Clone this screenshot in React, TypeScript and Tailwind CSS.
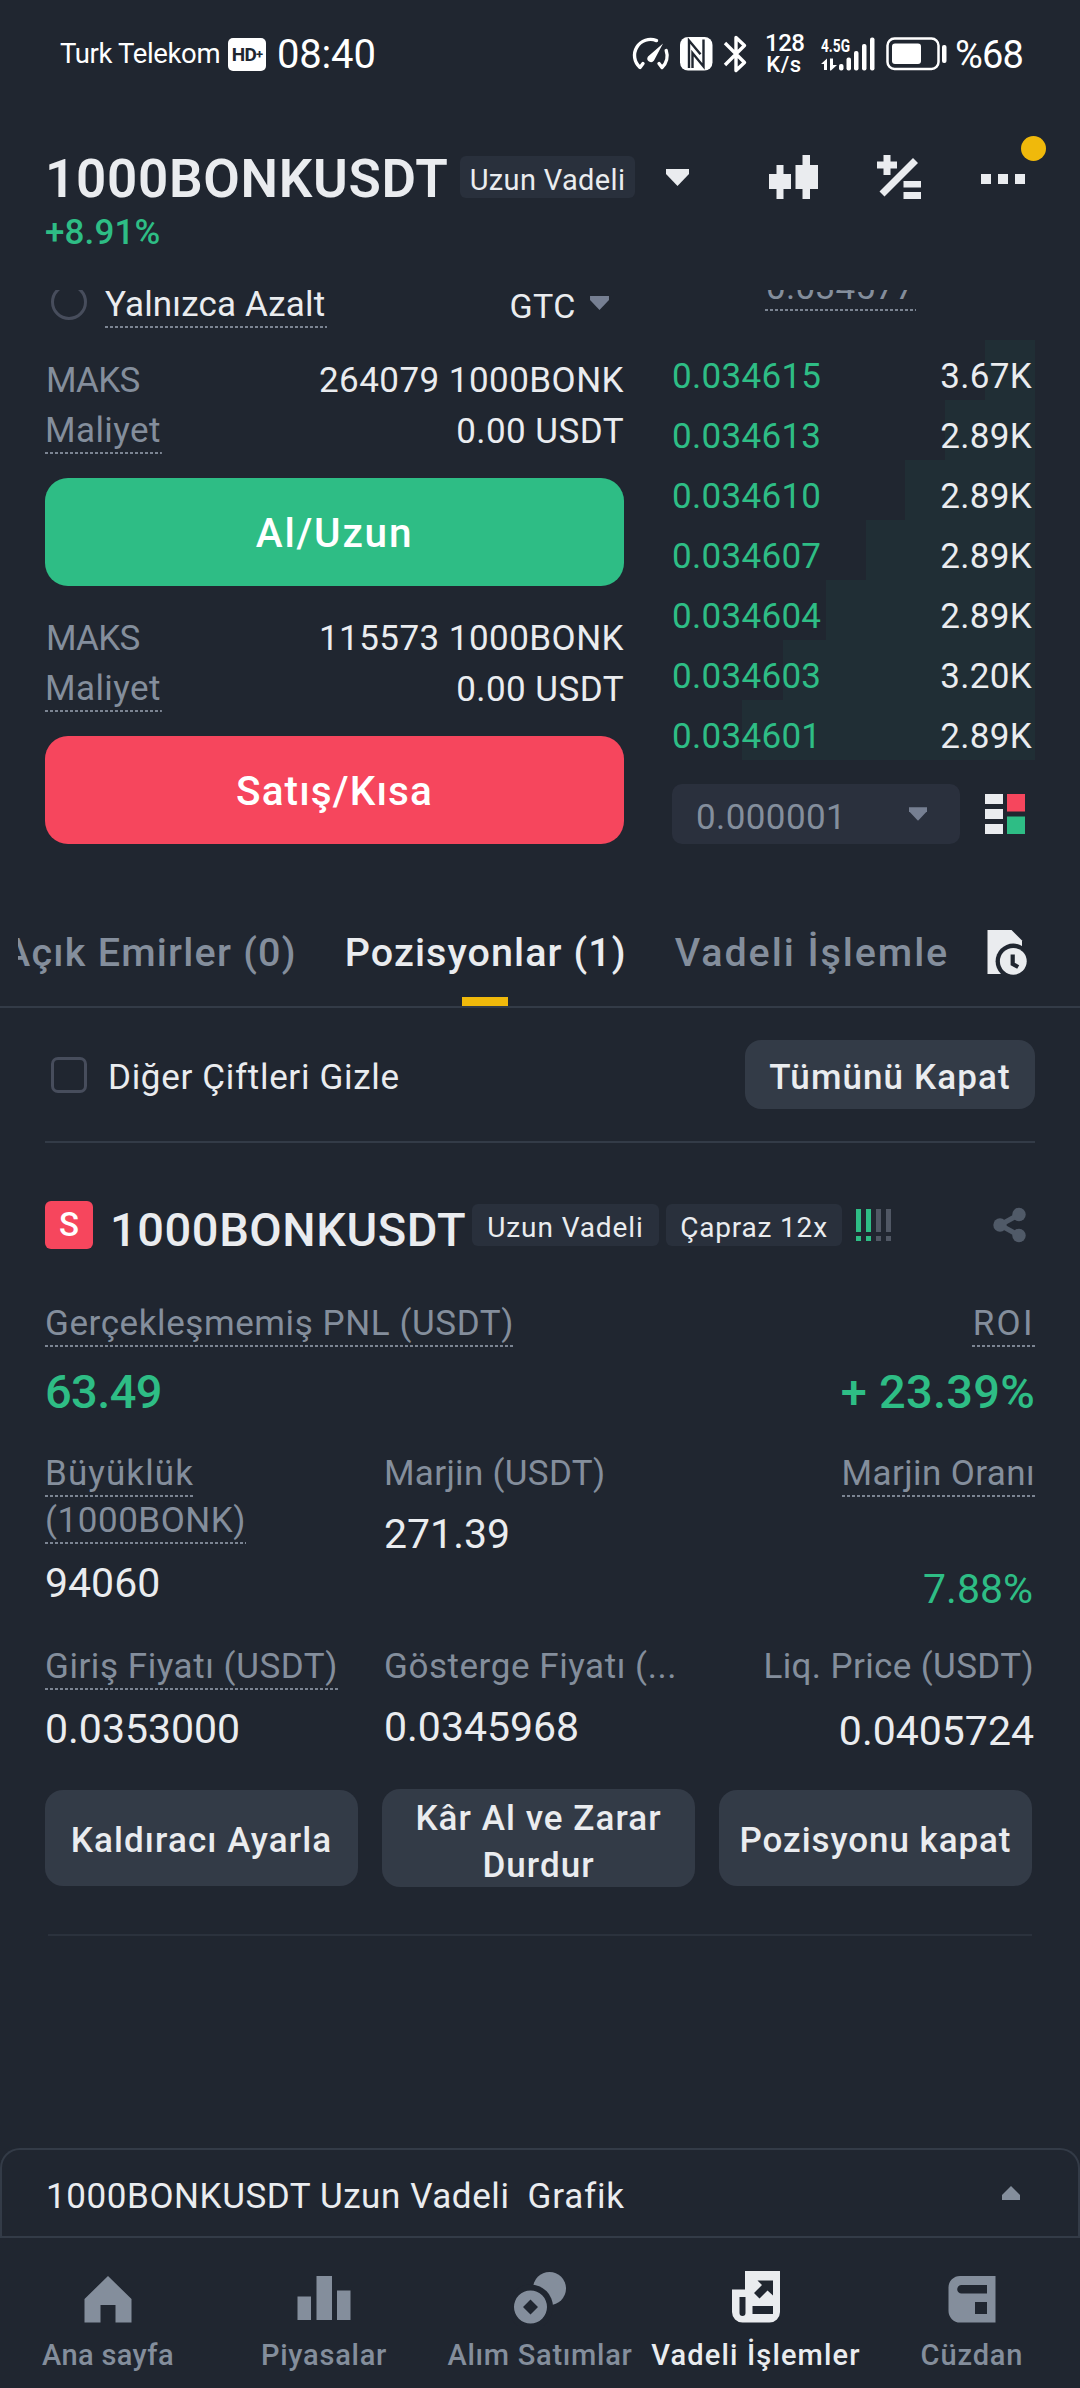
import React from "react";

interface Order {
  price: string;
  amount: string;
  depth: number;
}

// depth is the width of the green bar in px
const bids: Order[] = [
  { price: "0.034615", amount: "3.67K", depth: 50 },
  { price: "0.034613", amount: "2.89K", depth: 90 },
  { price: "0.034610", amount: "2.89K", depth: 130 },
  { price: "0.034607", amount: "2.89K", depth: 169 },
  { price: "0.034604", amount: "2.89K", depth: 209 },
  { price: "0.034603", amount: "3.20K", depth: 252 },
  { price: "0.034601", amount: "2.89K", depth: 293 },
];

const Dotted: React.FC<{ children: React.ReactNode; className?: string }> = ({
  children,
  className = "",
}) => (
  <span
    className={`block w-fit whitespace-nowrap bg-[repeating-linear-gradient(90deg,#7b8492_0_3px,transparent_3px_5px)] bg-[length:100%_2px] bg-bottom bg-no-repeat pb-[2px] leading-[42px] ${className}`}
  >
    {children}
  </span>
);

const CaretDown: React.FC<{ className?: string }> = ({ className = "" }) => (
  <svg viewBox="0 0 23 17" fill="currentColor" className={className}>
    <path d="M0 0h23v5L11.5 17 0 5z" />
  </svg>
);

const StatusBar: React.FC = () => (
  <div className="flex h-[108px] shrink-0 items-center pl-[60px] text-white">
    <span className="w-[168px] text-[27.5px] tracking-[-0.36px]">Turk Telekom</span>
    <span className="flex h-[33px] w-[38px] items-center justify-center rounded-[5px] bg-white text-[19px] font-bold leading-none tracking-[-0.8px] text-[#202630]">
      HD<span className="text-[13px]">+</span>
    </span>
    <span className="ml-[11px] w-[355px] pt-[2px] text-[40px] leading-none tracking-[-0.18px]">
      08:40
    </span>
    <svg width="38" height="36" viewBox="0 0 38 36" fill="none" stroke="currentColor" strokeWidth="3.4">
      <path d="M11 27.5 8 31.5A16 16 0 0 1 24.5 4.6M34.2 14.5A16 16 0 0 1 30 31.5l-3-4" strokeLinejoin="round" strokeLinecap="round" />
      <path d="M31 7.5 22 24.5a3.6 3.6 0 0 1-6-4z" fill="currentColor" stroke="none" />
    </svg>
    <svg width="33" height="34" viewBox="0 0 33 34" className="ml-[10px]">
      <rect width="32.5" height="33.5" rx="8" fill="#fff" />
      <path d="M9 31V3.5l11.5 13.7M23.5 2.5v27L12.5 16v15" fill="none" stroke="#202630" strokeWidth="2.4" />
    </svg>
    <svg width="24" height="38" viewBox="0 0 24 38" fill="none" stroke="currentColor" strokeWidth="3.4" className="ml-[10px]" strokeLinejoin="round">
      <path d="M2 8l19.5 19.5L13 35.5V2.5l8.5 8L2 30" />
    </svg>
    <div className="ml-[18px] w-[38px] text-center font-medium">
      <p className="text-[24px] leading-[21px] tracking-[-0.5px]">128</p>
      <p className="text-[22px] leading-[21px] tracking-[0.6px]">K/s</p>
    </div>
    <svg width="54" height="34" viewBox="0 0 54 34" fill="currentColor" className="ml-[18px]">
      <text x="0" y="14.5" fontSize="19" fontWeight="700" textLength="29" lengthAdjust="spacingAndGlyphs">
        4.5G
      </text>
      <path d="M0 27l6-5.5V33H3v-6zM9 21.5h3V28h4l-6 5.5H9z" />
      <rect x="18" y="27" width="4.5" height="6.5" rx="2" />
      <rect x="25.5" y="20.5" width="4.5" height="13" rx="2" />
      <rect x="33" y="14" width="4.5" height="19.5" rx="2" />
      <rect x="41" y="7" width="4.5" height="26.5" rx="2" />
      <rect x="49" y="0.5" width="4.5" height="33" rx="2" />
    </svg>
    <svg width="62" height="34" viewBox="0 0 62 34" className="ml-[11px]">
      <rect x="1.5" y="1.5" width="51" height="30.5" rx="7" fill="none" stroke="#fff" strokeWidth="2.5" />
      <rect x="6" y="6.5" width="29" height="20.5" rx="3" fill="#fff" />
      <rect x="56" y="8" width="4.5" height="18" rx="2" fill="#fff" />
    </svg>
    <span className="ml-[7px] pt-[2px] text-[38px] leading-none tracking-[-0.89px]">%68</span>
  </div>
);

const Header: React.FC = () => (
  <header className="h-[182px] shrink-0 px-[45px] pt-[40px]">
    <div className="flex h-[58px] items-center">
      <h1 className="w-[415px] whitespace-nowrap pt-[4px] text-[53px] font-semibold leading-[58px] tracking-[0.7px]">
        1000BONKUSDT
      </h1>
      <span className="h-[42px] w-[175px] rounded-[6px] bg-[#29303c] pt-[4px] text-center text-[29px] leading-[40px] tracking-[0.35px]">
        Uzun Vadeli
      </span>
      <CaretDown className="ml-[31px] h-[17px] w-[23px]" />
      <svg width="49" height="44" viewBox="0 0 49 44" fill="currentColor" className="ml-[80px]">
        <path d="M7.5 10h7v34h-7zM0 19h22v15H0zM33.5 0H41v44h-7.5zM26.5 10H49v24H26.5z" />
      </svg>
      <svg width="44" height="44" viewBox="0 0 44 44" fill="currentColor" className="ml-[59px]">
        <path d="M6.5 0h7v6.500h6.500v7h-6.500v6.500h-7v-6.500H0v-7h6.500zM26.500 26H44v6.500H26.500zM26.500 37H44v7H26.500z" />
        <path d="M38.5 5.5 5 39" stroke="currentColor" strokeWidth="7" />
      </svg>
      <div className="relative ml-[60px] mt-[4px] flex gap-[7px]">
        <i className="size-[10px] bg-current" />
        <i className="size-[10px] bg-current" />
        <i className="size-[10px] bg-current" />
        <i className="absolute -top-[38px] left-[40px] size-[25px] rounded-full bg-[#f0b90b]" />
      </div>
    </div>
    <p className="mt-[5px] text-[35px] font-medium leading-[44px] tracking-[0.15px] text-[#2ebd85]">
      +8.91%
    </p>
  </header>
);

interface TradeSideProps {
  max: string;
  label: string;
  color: string;
  tracking: string;
}

const TradeSide: React.FC<TradeSideProps> = ({ max, label, color, tracking }) => (
  <div className="pt-[31px]">
    <div className="flex justify-between leading-[44px]">
      <span className="pl-[1px] tracking-[-0.75px] text-[#848e9c]">MAKS</span>
      <span className="tracking-[0.46px]">{max}</span>
    </div>
    <div className="mt-[7px] flex justify-between">
      <Dotted className="pr-px tracking-[0.4px] text-[#848e9c]">Maliyet</Dotted>
      <span className="leading-[44px] tracking-[0.45px]">0.00 USDT</span>
    </div>
    <button
      className={`mt-[24px] block h-[108px] w-full rounded-[23px] pt-[3px] text-[40.5px] font-medium text-white ${tracking} ${color}`}
    >
      {label}
    </button>
  </div>
);

const OrderBook: React.FC = () => (
  <div className="w-[363px] text-[35px]">
    <div className="-mt-[23px] ml-[93px] flex text-[#848e9c]">
      <Dotted className="px-px tracking-[0.3px]">0.034577</Dotted>
    </div>
    <ul className="mt-[29px]">
      {bids.map((bid) => (
        <li key={bid.price} className="relative flex h-[60px] justify-between pr-[3px] pt-[13px] leading-[47px]">
          <i className="absolute inset-y-0 right-0 bg-[#202e35]" style={{ width: bid.depth }} />
          <span className="relative tracking-[0.3px] text-[#2ebd85]">{bid.price}</span>
          <span className="relative tracking-[0.3px]">{bid.amount}</span>
        </li>
      ))}
    </ul>
    <div className="mt-[24px] flex items-center justify-between pr-[10px]">
      <div className="flex h-[60px] w-[288px] items-center justify-between rounded-[10px] bg-[#2a303d] pl-[24px] pr-[33px] text-[#848e9c]">
        <span className="pt-[8px] tracking-[0.4px]">0.000001</span>
        <CaretDown className="h-[14px] w-[18px] text-[#767f92]" />
      </div>
      <svg width="40" height="40" viewBox="0 0 40 40" fill="#eaecef">
        <path d="M0 0h18v10H0zM0 15h18v10H0zM0 30h18v10H0z" />
        <path d="M22 0h18v17.500H22z" fill="#f6465d" />
        <path d="M22 22.500h18V40H22z" fill="#2ebd85" />
      </svg>
    </div>
  </div>
);

const TradePanel: React.FC = () => (
  <section className="flex h-[560px] shrink-0 justify-between overflow-hidden px-[45px]">
    <div className="w-[579px] text-[35px]">
      <div className="-mt-[6px] flex h-[44px] items-center">
        <i className="-mt-[8px] ml-[6px] size-[36px] shrink-0 rounded-full border-[3px] border-[#474d5c]" />
        <Dotted className="ml-[18px] pr-[2px] tracking-[0.18px]">Yalnızca Azalt</Dotted>
        <span className="ml-auto text-[34px] tracking-[0.5px]">GTC</span>
        <CaretDown className="-mt-[7px] ml-[14px] mr-[15px] h-[14px] w-[19px] text-[#767f92]" />
      </div>
      <TradeSide max="264079 1000BONK" label="Al/Uzun" color="bg-[#2ebd85]" tracking="tracking-[1.8px]" />
      <TradeSide max="115573 1000BONK" label="Satış/Kısa" color="bg-[#f6465d]" tracking="tracking-[1.1px]" />
    </div>
    <OrderBook />
  </section>
);

const Tabs: React.FC = () => (
  <nav className="mt-[49px] flex h-[109px] shrink-0 items-center border-b-2 border-[#333b47] pl-[18px] pr-[54px] text-[39.5px] font-medium text-[#848e9c]">
    <div className="flex h-full w-[934px] gap-[48px] overflow-hidden whitespace-nowrap leading-[108px]">
      <span className="ml-[-14px] tracking-[1.22px]">Açık Emirler (0)</span>
      <span className="relative tracking-[1.07px] text-[#eaecef]">
        Pozisyonlar (1)
        <i className="absolute bottom-0 left-[117px] h-[9px] w-[46px] bg-[#f0b90b]" />
      </span>
      <span className="tracking-[1.92px]">Vadeli İşlemle</span>
    </div>
    <svg width="40" height="46" viewBox="0 0 40 46" className="-mr-[1px] ml-auto shrink-0">
      <path d="M.5 0h24L35 10.5V44H.5z" fill="#eaecef" />
      <circle cx="26.3" cy="31.3" r="17.7" fill="#202630" />
      <circle cx="26.3" cy="31.3" r="13.4" fill="#eaecef" />
      <path d="M25.7 24.5v9.500l5.500 3" fill="none" stroke="#202630" strokeWidth="4.2" />
    </svg>
  </nav>
);

const Strength: React.FC = () => (
  <svg width="36" height="32" viewBox="0 0 36 32" fill="#505764" className="ml-[14px]">
    <path d="M0 0h5v23H0zM0 27h5v5H0zM10 0h5v23h-5zM10 27h5v5h-5z" fill="#2ebd85" />
    <path d="M20 0h5v23h-5zM20 27h5v5h-5zM30 0h5v23h-5zM30 27h5v5h-5z" />
  </svg>
);

const Position: React.FC = () => (
  <section className="px-[45px] pt-[58px] text-[35px]">
    <div className="flex h-[48px] items-center">
      <span className="w-[48px] rounded-[6px] bg-[#f6465d] text-center text-[33px] font-medium leading-[48px] text-white">
        S
      </span>
      <h2 className="ml-[17px] w-[362px] whitespace-nowrap pt-[9px] text-[47px] font-medium leading-[48px] tracking-[0.57px]">
        1000BONKUSDT
      </h2>
      <span className="h-[42px] w-[187px] rounded-[6px] bg-[#29303c] pt-[3px] text-center text-[28px] leading-[42px] tracking-[0.9px]">
        Uzun Vadeli
      </span>
      <span className="ml-[7px] h-[42px] w-[176px] rounded-[6px] bg-[#29303c] pt-[3px] text-center text-[28px] leading-[42px] tracking-[0.82px]">
        Çapraz 12x
      </span>
      <Strength />
      <svg width="34" height="36" viewBox="0 0 34 36" fill="#505a68" className="ml-auto mr-[8px]">
        <path d="M26 7.5 7 18l19 10.5" fill="none" stroke="#505a68" strokeWidth="5" />
        <circle cx="26" cy="7.5" r="6.7" />
        <circle cx="7" cy="18" r="6.7" />
        <circle cx="26" cy="28.5" r="6.7" />
      </svg>
    </div>

    <div className="mt-[54px] flex justify-between text-[#848e9c]">
      <Dotted className="tracking-[0.58px]">Gerçekleşmemiş PNL (USDT)</Dotted>
      <Dotted className="pl-px tracking-[2.4px]">ROI</Dotted>
    </div>
    <div className="mt-[17px] flex justify-between text-[47px] font-medium leading-[56px] text-[#2ebd85]">
      <span className="tracking-[-0.6px]">63.49</span>
      <span className="tracking-[0.25px]">+ 23.39%</span>
    </div>

    <div className="mt-[33px] flex h-[160px]">
      <div className="w-[339px]">
        <div className="text-[#848e9c]">
          <Dotted className="tracking-[1.1px]">Büyüklük</Dotted>
          <Dotted className="mt-[3px] tracking-[0.54px]">(1000BONK)</Dotted>
        </div>
        <p className="mt-[15px] text-[41px] leading-[48px]">94060</p>
      </div>
      <div className="w-[339px]">
        <p className="leading-[42px] tracking-[0.31px] text-[#848e9c]">Marjin (USDT)</p>
        <p className="mt-[15px] text-[41px] leading-[48px]">271.39</p>
      </div>
      <div className="flex flex-1 flex-col items-end">
        <Dotted className="tracking-[0.4px] text-[#848e9c]">Marjin Oranı</Dotted>
        <p className="mt-[68px] pr-[2px] text-[41px] leading-[48px] text-[#2ebd85]">7.88%</p>
      </div>
    </div>

    <div className="mt-[33px] flex h-[109px]">
      <div className="w-[339px]">
        <Dotted className="tracking-[0.55px] text-[#848e9c]">Giriş Fiyatı (USDT)</Dotted>
        <p className="mt-[15px] text-[41px] leading-[48px]">0.0353000</p>
      </div>
      <div className="w-[339px]">
        <p className="leading-[42px] tracking-[0.55px] text-[#848e9c]">Gösterge Fiyatı (...</p>
        <p className="mt-[15px] text-[41px] leading-[48px]">0.0345968</p>
      </div>
      <div className="flex-1 whitespace-nowrap pr-px text-right">
        <p className="leading-[42px] tracking-[0.37px] text-[#848e9c]">Liq. Price (USDT)</p>
        <p className="mt-[19px] text-[41px] leading-[48px]">0.0405724</p>
      </div>
    </div>

    <div className="mt-[34px] flex items-center gap-[24px] font-medium">
      <button className="h-[96px] w-[313px] rounded-[18px] bg-[#333b47] pt-[6px] tracking-[1.1px]">
        Kaldıracı Ayarla
      </button>
      <button className="h-[98px] w-[313px] rounded-[18px] bg-[#333b47] px-[30px] pt-[6px] leading-[47px] tracking-[1.05px]">
        Kâr Al ve Zarar Durdur
      </button>
      <button className="h-[96px] w-[313px] rounded-[18px] bg-[#333b47] pt-[6px] tracking-[0.93px]">
        Pozisyonu kapat
      </button>
    </div>
    <div className="mx-[3px] mt-[47px] h-[2px] bg-[#2b323d]" />
  </section>
);

const navItems: { label: string; tracking: string; icon: React.ReactNode }[] = [
  {
    label: "Ana sayfa",
    tracking: "tracking-[0.37px]",
    icon: <path d="M28 6 51.5 29v23.5H35.5V35h-15v17.5h-16V29z" />,
  },
  {
    label: "Piyasalar",
    tracking: "tracking-[0.76px]",
    icon: <path d="M1.5 26.5H15V50H1.5zM20.5 6H36v44H20.5zM41 20.5h13.5V50H41z" />,
  },
  {
    label: "Alım Satımlar",
    tracking: "tracking-[0.72px]",
    icon: (
      <>
        <circle cx="37.5" cy="18.5" r="16.5" />
        <circle cx="18.5" cy="37" r="22.5" fill="#202630" />
        <path
          fillRule="evenodd"
          d="M18.5 20.5a16.5 16.5 0 1 1 0 33 16.5 16.5 0 0 1 0-33zM18.5 29.5l-7.500 7.500 7.500 7.500L26 37z"
        />
      </>
    ),
  },
  {
    label: "Vadeli İşlemler",
    tracking: "tracking-[1.15px]",
    icon: (
      <path
        fillRule="evenodd"
        d="M17 1h35v41a10.5 10.5 0 0 1-10.5 10.5h-27A10.5 10.5 0 0 1 4 42V19.5h13zM11.5 27v16a3 3 0 0 0 6 0V27zM24.5 36v8H45v-8zM29.5 10.5l4.500 4.500-8 8 5.500 5.500 8-8 5.500 5V10.5z"
      />
    ),
  },
  {
    label: "Cüzdan",
    tracking: "tracking-[0.88px]",
    icon: (
      <path
        fillRule="evenodd"
        d="M16 6h35.5v46.5H16A11.5 11.5 0 0 1 4.500 41V17.5A11.5 11.5 0 0 1 16 6zM17.5 15a4.300 4.300 0 0 0 0 8.600H43V15zM31 32v12h12V32z"
      />
    ),
  },
];

const BottomNav: React.FC = () => (
  <nav className="grid h-[152px] shrink-0 grid-cols-5 border-t-2 border-[#333b47]">
    {navItems.map((item, i) => (
      <div
        key={item.label}
        className={`flex flex-col items-center pt-[32px] ${i === 3 ? "text-[#eaecef]" : "text-[#848e9c]"}`}
      >
        <svg width="56" height="56" viewBox="0 0 56 56" fill="currentColor">
          {item.icon}
        </svg>
        <span className={`mt-[9px] whitespace-nowrap text-[29px] font-medium leading-[40px] ${item.tracking}`}>
          {item.label}
        </span>
      </div>
    ))}
  </nav>
);

const App: React.FC = () => {
  return (
    <div className="flex h-[2388px] w-[1080px] flex-col overflow-hidden bg-[#202630] font-[Roboto,sans-serif] text-[#eaecef]">
      <StatusBar />
      <Header />
      <TradePanel />
      <Tabs />
      <div className="mx-[45px] flex h-[135px] shrink-0 items-center border-b-2 border-[#333b47] text-[35px]">
        <i className="ml-[6px] size-[36px] rounded-[7px] border-[3px] border-[#474d5c]" />
        <span className="ml-[21px] pt-[8px] tracking-[0.68px]">Diğer Çiftleri Gizle</span>
        <button className="ml-auto h-[69px] w-[290px] rounded-[16px] bg-[#333b47] pt-[8px] font-medium tracking-[1.1px]">
          Tümünü Kapat
        </button>
      </div>
      <Position />
      <div className="mt-auto flex h-[88px] shrink-0 items-center justify-between rounded-t-[20px] border-2 border-b-0 border-[#333b47] pl-[44px] pr-[58px] text-[35px]">
        <span className="whitespace-pre pt-[8px]">
          <span className="tracking-[0.58px]">1000BONKUSDT Uzun Vadeli</span>
          <span className="ml-[18px] tracking-[0.8px]">Grafik</span>
        </span>
        <svg width="18" height="14" viewBox="0 0 18 14" fill="#848e9c">
          <path d="M9 0l9 9v5H0V9z" />
        </svg>
      </div>
      <BottomNav />
    </div>
  );
};

export default App;
